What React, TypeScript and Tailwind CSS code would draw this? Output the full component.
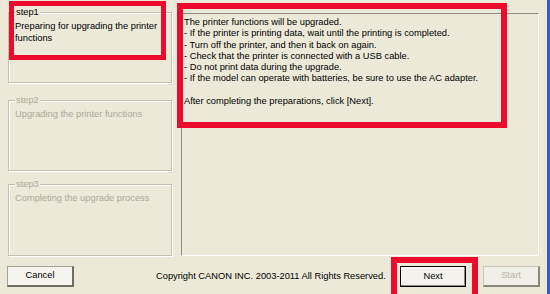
const font = { fontFamily: '"Liberation Sans", Arial, sans-serif' };

type Step = { label: string; text: string; active?: boolean; h: string; mt: string };

const steps: Step[] = [
  { label: 'step1', text: 'Preparing for upgrading the printer functions', active: true, h: 'h-[71px]', mt: 'mt-0' },
  { label: 'step2', text: 'Upgrading the printer functions', h: 'h-[71px]', mt: 'mt-[17px]' },
  { label: 'step3', text: 'Completing the upgrade process', h: 'h-[72px]', mt: 'mt-[13px]' },
];

const lines = [
  'The printer functions will be upgraded.',
  '- If the printer is printing data, wait until the printing is completed.',
  '- Turn off the printer, and then it back on again.',
  '- Check that the printer is connected with a USB cable.',
  '- Do not print data during the upgrade.',
  '- If the model can operate with batteries, be sure to use the AC adapter.',
];

function StepBox({ step }: { step: Step }) {
  const color = step.active ? 'text-black' : 'text-[#aca899]';
  return (
    <div
      className={`relative ${step.h} ${step.mt} border border-[#c4c1b2] shadow-[inset_1px_1px_0_#ffffff,1px_1px_0_#ffffff] pt-[7px] pl-[6px] pr-[4px] ${color}`}
    >
      <span className="absolute -top-[6px] left-[6px] px-[1px] bg-[#ece9d8] leading-[11px]">{step.label}</span>
      <p className="leading-[12px]">{step.text}</p>
    </div>
  );
}

export default function App() {
  return (
    <div
      className="relative w-[550px] h-[294px] overflow-hidden bg-[#ece9d8] text-[9.3px] text-black flex"
      style={font}
    >
      <div className="flex-1 flex flex-col">
        {/* Top area */}
        <div className="flex items-start">
          <div className="w-[164px] ml-[8px] pt-[12px] flex flex-col">
            {steps.map((s) => (
              <StepBox key={s.label} step={s} />
            ))}
          </div>
          <div className="ml-[9px] mt-[13px] w-[358px] h-[243px] border border-t-[#8f8d80] border-l-[#8f8d80] border-b-white border-r-white pt-[3px] pl-[2px] leading-[11.3px]">
            {lines.map((l) => (
              <div key={l}>{l}</div>
            ))}
            <div className="h-[11.3px]" />
            <div>After completing the preparations, click [Next].</div>
          </div>
        </div>

        {/* Bottom bar */}
        <div className="mt-[10px] flex items-center h-[21px]">
          <button className="ml-[7px] w-[67px] h-[21px] bg-[#f5f4ef] border border-[#a5a396] border-b-[#6f6d62] border-r-[#6f6d62] border-b-2 border-r-2">
            Cancel
          </button>
          <span className="ml-[82px]">Copyright CANON INC. 2003-2011 All Rights Reserved.</span>
          <div className="ml-auto mr-[3px] flex gap-[17px]">
            <button className="w-[66px] h-[21px] bg-[#f3f2ec] border border-black shadow-[inset_-1px_-1px_0_#8a887c,inset_1px_1px_0_#ffffff]">
              Next
            </button>
            <button className="w-[57px] h-[21px] bg-[#f0efe8] text-[#b8b5a6] border border-[#c9c6b8] border-b-[#8a887c] border-r-[#8a887c] border-b-2 border-r-2">
              Start
            </button>
          </div>
        </div>
      </div>

      {/* window frame edge */}
      <div className="w-[3px] mr-0 ml-[4px] bg-[#2c5fd6]" />

      {/* red highlight overlays */}
      <div className="absolute left-[9px] top-[1px] w-[157px] h-[59px] border-[5px] border-[#ec0b2d]" />
      <div className="absolute left-[177px] top-[3px] w-[330px] h-[125px] border-[6px] border-[#ec0b2d]" />
      <div className="absolute left-[391px] top-[257px] w-[87px] h-[44px] border-[6px] border-[#ec0b2d]" />
    </div>
  );
}
